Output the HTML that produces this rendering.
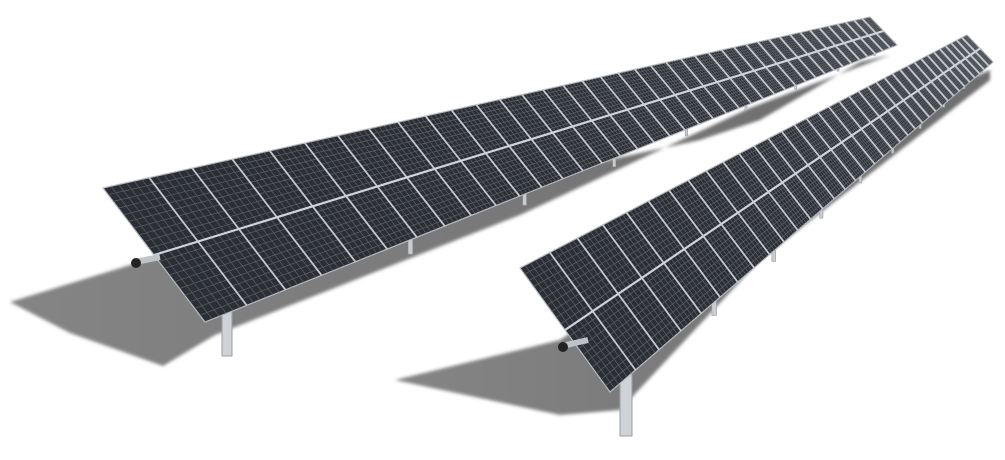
<!DOCTYPE html>
<html><head><meta charset="utf-8"><style>
html,body{margin:0;padding:0;background:#fff;width:1005px;height:460px;overflow:hidden}
</style></head><body>
<svg id="s" width="1005" height="460" viewBox="0 0 1005 460" xmlns="http://www.w3.org/2000/svg">
<defs>
<linearGradient id="sh1" x1="0" y1="0" x2="1" y2="0"><stop offset="0" stop-color="#858585"/><stop offset="1" stop-color="#6e6e6e"/></linearGradient>
<filter id="bl"><feGaussianBlur stdDeviation="1.5"/></filter>
</defs>
<g filter="url(#bl)">
<polygon points="10,302 140,262 700,140 760,120 860,62 890,55 750,108 520,215 215,335 163,366 70,333" fill="url(#sh1)"/>
<polygon points="395,380 560,340 900,110 990,70 990,80 760,260 620,410 560,415" fill="url(#sh1)"/>
</g>
<g id="g"></g>
</svg>
<script>
var g=document.getElementById('g'),NS='http://www.w3.org/2000/svg';
function el(t,a){var e=document.createElementNS(NS,t);for(var k in a)e.setAttribute(k,a[k]);g.appendChild(e);return e;}
function L(a,b,t){return [a[0]+(b[0]-a[0])*t,a[1]+(b[1]-a[1])*t];}
function proj(t,r){return t*r/(1+t*(r-1));}
function legs(bl,br,n,r,h){for(var i=1;i<n;i++){var t=proj((i+0.3)/n,r);var p=L(bl,br,t);var w=Math.max(2,6*(1-t*0.85));var hh=h*(1-t*0.8);
el('rect',{x:p[0]-w/2,y:p[1]-4,width:w,height:hh,fill:'#c9ccd0',stroke:'#9a9ea3','stroke-width':0.6});}}
function panel(tl,tr,br,bl,n,r){
 el('polygon',{points:[tl,tr,br,bl].map(function(p){return p.join(',')}).join(' '),fill:'#2b2e35',stroke:'#b8bcc2','stroke-width':1.2});
 var d='',D='';
 var N=n*6;
 for(var i=1;i<N;i++){var t=proj(i/N,r);var a=L(tl,tr,t),b=L(bl,br,t);
  if(i%6==0)D+='M'+a+'L'+b;else d+='M'+a+'L'+b;}
 var M=20;
 for(var j=1;j<M;j++){var a=L(tl,bl,j/M),b=L(tr,br,j/M);if(j!=10)d+='M'+a+'L'+b;}
 el('path',{d:d,stroke:'#6a6e76','stroke-width':0.7,fill:'none',opacity:0.8});
 el('path',{d:D,stroke:'#c4c8ce','stroke-width':1.8,fill:'none'});
 var a=L(tl,bl,0.5),b=L(tr,br,0.5);
 el('line',{x1:a[0],y1:a[1],x2:b[0],y2:b[1],stroke:'#d0d3d8','stroke-width':2.2});
}
// row 1
legs([205,322],[897,45],9,2.5,24);
el('rect',{x:222,y:300,width:10,height:56,fill:'#cfd2d6',stroke:'#9a9ea3'});
panel([103,188],[870,17],[897,45],[205,322],40,2.5);
el('line',{x1:135,y1:262,x2:160,y2:257,stroke:'#bfc3c8','stroke-width':6});
el('circle',{cx:136,cy:263,r:5,fill:'#222'});
// row 2
legs([610,392],[993,62],10,2.5,22);
el('rect',{x:620,y:370,width:12,height:66,fill:'#cfd2d6',stroke:'#9a9ea3'});
panel([520,268],[967,35],[993,62],[610,392],36,2.5);
el('line',{x1:562,y1:346,x2:588,y2:340,stroke:'#bfc3c8','stroke-width':6});
el('circle',{cx:563,cy:347,r:5,fill:'#222'});
</script>
</body></html>
